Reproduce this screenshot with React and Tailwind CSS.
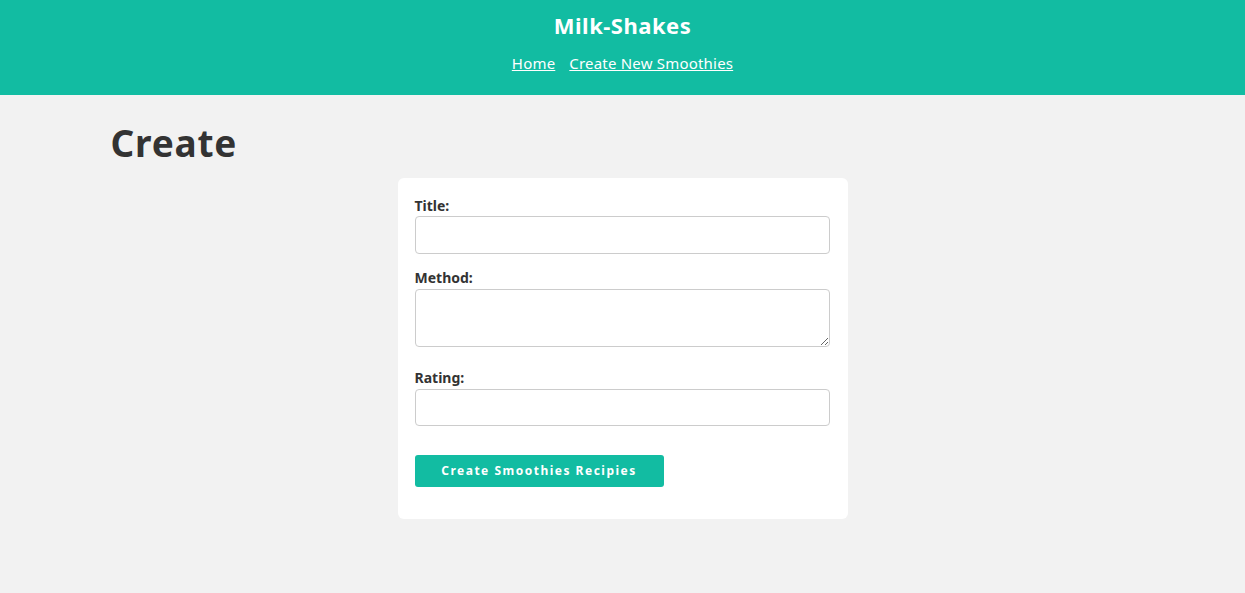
import React from "react";

const font = { fontFamily: '"Noto Sans", "Open Sans", sans-serif' };

const App = () => {
  return (
    <div className="min-h-screen bg-[#f2f2f2] text-[#333]" style={font}>
      {/* Header */}
      <header className="h-[95px] bg-[#12bca2] flex flex-col items-center pt-[10px]">
        <h1 className="text-[22px] leading-[30px] font-bold text-white tracking-[0.5px]">Milk-Shakes</h1>
        <nav className="mt-[12px] flex gap-[14px] text-[15px] leading-[22px] text-white tracking-[0.2px]">
          <a href="#" className="underline">Home</a>
          <a href="#" className="underline">Create New Smoothies</a>
        </nav>
      </header>

      {/* Content */}
      <main className="max-w-[1024px] mx-auto pt-[24px]">
        <h2 className="text-[37px] leading-[48px] font-bold text-[#333] tracking-[0.8px]">Create</h2>

        <form className="w-[450px] mx-auto mt-[11px] bg-white rounded-[6px] px-[17px] pt-[19px] pb-[32px]">
          <label className="block text-[14px] leading-[18px] font-bold text-[#333]">Title:</label>
          <input
            type="text"
            className="block w-[415px] h-[38px] mt-[1px] border border-[#ccc] rounded-[4px] px-2 outline-none"
          />

          <label className="block mt-[15px] text-[14px] leading-[18px] font-bold text-[#333]">Method:</label>
          <textarea
            className="block w-[415px] h-[58px] mt-[2px] border border-[#ccc] rounded-[4px] px-2 outline-none"
          ></textarea>

          <label className="block mt-[22px] text-[14px] leading-[18px] font-bold text-[#333]">Rating:</label>
          <input
            type="number"
            className="block w-[415px] h-[37px] mt-[2px] border border-[#ccc] rounded-[4px] px-2 outline-none"
          />

          <button
            type="button"
            className="mt-[29px] w-[249px] h-[32px] bg-[#12bca2] text-white text-[12px] font-bold tracking-[1.5px] rounded-[3px]"
          >
            Create Smoothies Recipies
          </button>
        </form>
      </main>
    </div>
  );
};

export default App;
